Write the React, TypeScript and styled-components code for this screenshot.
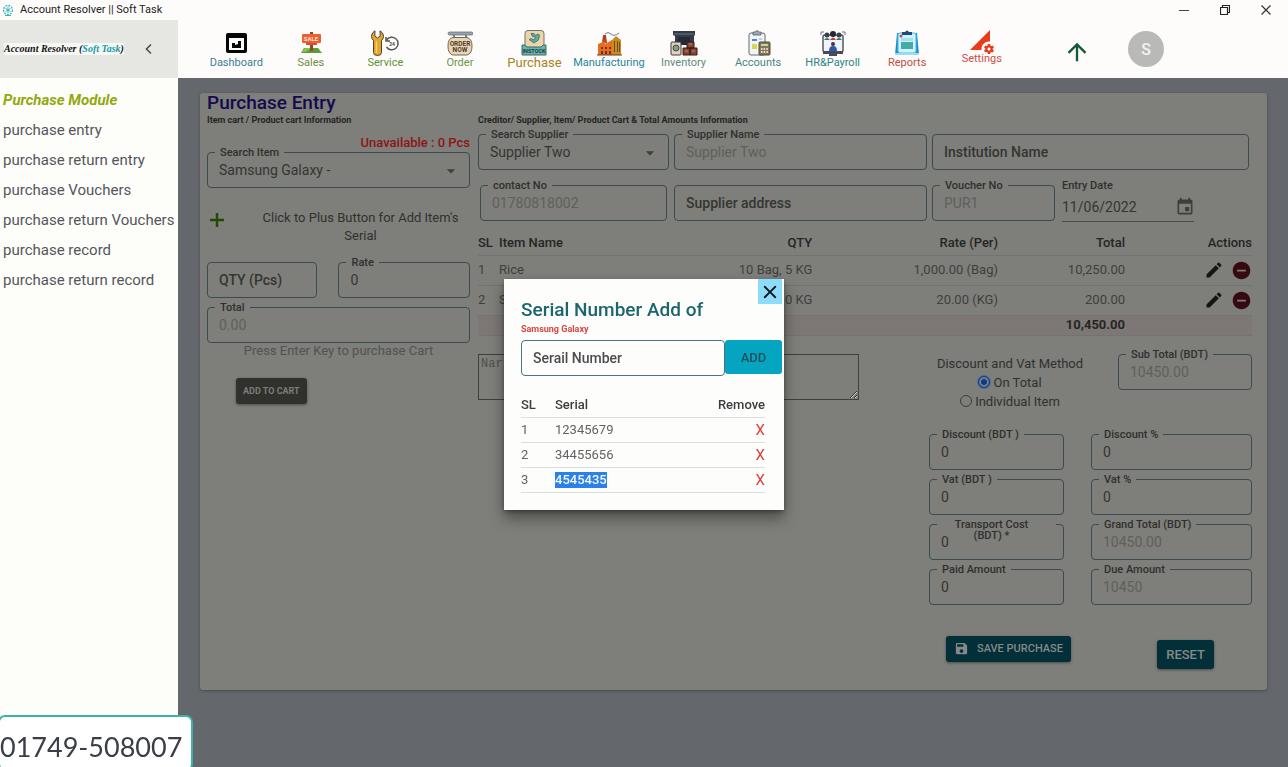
import React, { ReactNode, useId } from "react";
import styled, { createGlobalStyle } from "styled-components";
import {
  MdArrowDropDown,
  MdArrowUpward,
  MdClose,
  MdEdit,
  MdEvent,
  MdPermDataSetting,
  MdRemoveCircle,
  MdSave,
} from "react-icons/md";

const c = {
  ink: "#343533",
  text: "#3e3f3d",
  faint: "#5f605d",
  line: "#3c4b50",
  card: "#7e7e7a",
  rule: "#737370",
  tealDark: "#022f38",
};

const Global = createGlobalStyle`
  *, *::before, *::after { box-sizing: border-box; }
  body { margin: 0; font-family: Roboto, "Liberation Sans", sans-serif; background: #64676c; }
  button, input, select { font: inherit; color: inherit; }
  button { cursor: pointer; border: 0; padding: 0; background: none; }
  h1, h2, h3, p, ul { margin: 0; padding: 0; }
  ul { list-style: none; }
`;

/* ---------- frame ---------- */

const Page = styled.div`
  min-height: 100vh;
  display: flex;
  flex-direction: column;
`;
const TitleBar = styled.header`
  height: 20px;
  display: flex;
  align-items: center;
  gap: 6px;
  padding-left: 2px;
  background: #fdfcfb;
  font-size: 11px;
  line-height: 20px;
  color: #222;
`;
const WindowButtons = styled.div`
  margin-left: auto;
  display: flex;
  padding-right: 2px;
`;
const WindowButton = styled.button`
  width: 41px;
  height: 20px;
  display: grid;
  place-items: center;
`;
const Shell = styled.div`
  flex: 1;
  display: flex;
`;
const Sidebar = styled.aside`
  flex: 0 0 178px;
  background: #fdfdfa;
`;
const Brand = styled.div`
  height: 58px;
  display: flex;
  align-items: center;
  gap: 19px;
  padding-left: 4px;
  background: #e6e6e3;
`;
const BrandName = styled.span`
  font: italic bold 10px/12px "Liberation Serif", serif;
  background: #f6f8f6;
  color: #111;
  white-space: nowrap;
  b { color: #1a9aa5; }
`;
const Menu = styled.nav`
  padding: 7px 0 0 3px;
`;
const MenuTitle = styled.h2`
  font-size: 15px;
  line-height: 30px;
  font-style: italic;
  font-weight: 700;
  color: #94a80f;
`;
const MenuLink = styled.a`
  display: block;
  font-size: 15px;
  line-height: 30px;
  color: #55565a;
  text-decoration: none;
  white-space: nowrap;
`;
const Content = styled.div`
  flex: 1;
  min-width: 0;
`;

/* ---------- top navigation ---------- */

const TopBar = styled.div`
  height: 58px;
  display: flex;
  align-items: center;
  padding-left: 21px;
  background: #fdfcfb;
`;
const NavList = styled.ul`
  flex: 1;
  display: grid;
  grid-template-columns: repeat(11, minmax(0, 1fr));
  height: 100%;
`;
const NavLink = styled.a<{ $color: string; $active?: boolean; $tight?: boolean }>`
  display: flex;
  flex-direction: column;
  align-items: center;
  padding-top: 10px;
  font-size: ${(p) => (p.$active ? 13 : 11)}px;
  line-height: 14px;
  color: ${(p) => p.$color};
  text-decoration: none;
  white-space: nowrap;
  span { display: grid; height: ${(p) => (p.$tight ? 22 : 26)}px; }
`;
const UserArea = styled.div`
  flex: 0 0 269px;
  display: flex;
  align-items: center;
  gap: 37px;
  padding-left: 44px;
`;
const UpButton = styled.button`
  display: grid;
  margin-top: 6px;
  color: #145a34;
`;
const Avatar = styled.button`
  width: 36px;
  height: 36px;
  border-radius: 50%;
  background: #b9b9b7;
  color: #f3f3f3;
  font-size: 16px;
  font-weight: 500;
`;

/* ---------- purchase form ---------- */

const Card = styled.main`
  margin: 15px 21px 0 22px;
  padding: 0 15px 21px 7px;
  background: ${c.card};
  border-radius: 3px;
  box-shadow: 0 1px 3px rgba(0, 0, 0, 0.3);
  color: ${c.text};
`;
const CardTitle = styled.h1`
  font-size: 19px;
  line-height: 20px;
  font-weight: 500;
  color: #15094f;
`;
const Columns = styled.div`
  display: grid;
  grid-template-columns: minmax(0, 263fr) minmax(0, 774fr);
  column-gap: 8px;
`;
const SectionTitle = styled.h3`
  font-size: 9px;
  line-height: 14px;
  font-weight: 700;
  color: #252624;
`;
const Unavailable = styled.p`
  margin: 8px 0 1px;
  font-size: 13px;
  line-height: 16px;
  font-weight: 500;
  text-align: right;
  color: #8c1515;
`;
const SerialHint = styled.div`
  display: flex;
  align-items: flex-start;
  gap: 24px;
  margin: 21px 0 17px;
  font-size: 13px;
  line-height: 18px;
  text-align: center;
  color: #30312f;
  p { flex: 1; }
`;
const PlusButton = styled.button`
  display: grid;
  color: #214a06;
`;
const QtyRow = styled.div`
  display: grid;
  grid-template-columns: minmax(0, 110fr) minmax(0, 131fr);
  gap: 21px;
  margin-bottom: 9px;
`;
const Helper = styled.p`
  margin: 1px 0 20px;
  font-size: 13px;
  line-height: 14px;
  text-align: center;
  color: #52534f;
`;
const FormButton = styled.button<{ $kind: "cart" | "save" | "reset" }>`
  display: inline-flex;
  align-items: center;
  justify-content: center;
  gap: 8px;
  height: ${(p) => (p.$kind === "reset" ? 29 : 26)}px;
  padding: 0 ${(p) => (p.$kind === "cart" ? 7 : p.$kind === "reset" ? 9 : 8)}px;
  margin: ${(p) => (p.$kind === "cart" ? "0 0 0 29px" : p.$kind === "reset" ? "4px 0 0" : "0")};
  border-radius: 3px;
  font-size: ${(p) => (p.$kind === "cart" ? 9 : p.$kind === "save" ? 11 : 13)}px;
  font-weight: ${(p) => (p.$kind === "cart" ? 700 : 500)};
  color: ${(p) => (p.$kind === "cart" ? "#7c7c79" : "#85898a")};
  background: ${(p) => (p.$kind === "cart" ? "#30312d" : c.tealDark)};
  box-shadow: 0 1px 3px rgba(0, 0, 0, 0.4);
`;

const FieldBox = styled.div`
  position: relative;
  height: 36px;
  border: 1px solid ${c.line};
  border-radius: 4px;
`;
const FieldLabel = styled.label<{ $wrap?: boolean }>`
  position: absolute;
  top: -6px;
  left: 7px;
  right: ${(p) => (p.$wrap ? "7px" : "auto")};
  padding: ${(p) => (p.$wrap ? "0 25px 0 15px" : "0 5px")};
  background: ${c.card};
  font-size: 11px;
  line-height: 11px;
  font-weight: 500;
  text-align: center;
  white-space: ${(p) => (p.$wrap ? "normal" : "nowrap")};
  color: #2f302e;
`;
const FieldInput = styled.input`
  position: relative;
  z-index: 1;
  width: 100%;
  height: 34px;
  padding: 0 11px;
  border: 0;
  outline: 0;
  background: none;
  font-size: 14px;
  color: ${c.ink};
  &::placeholder { color: ${c.ink}; font-weight: 500; opacity: 1; }
  &:disabled { color: ${c.faint}; }
`;
const FieldSelect = styled.select`
  width: 100%;
  height: 34px;
  padding: 0 28px 0 11px;
  border: 0;
  outline: 0;
  appearance: none;
  background: none;
  font-size: 14px;
  color: ${c.ink};
`;
const SelectArrow = styled(MdArrowDropDown)`
  position: absolute;
  right: 8px;
  top: 8px;
  pointer-events: none;
`;

const PartyGrid = styled.div`
  display: grid;
  grid-template-columns: minmax(0, 191fr) minmax(0, 253fr) minmax(0, 317fr);
  gap: 15px 5px;
  padding: 7px 3px 9px 0;
`;
const Inset = styled.div`
  padding: 0 2px;
`;
const VoucherRow = styled.div`
  display: grid;
  grid-template-columns: minmax(0, 1fr) 132px 48px;
  column-gap: 7px;
`;
const DateField = styled.div`
  border-bottom: 1px solid #4b4c4a;
  label {
    display: block;
    margin-top: -6px;
    font-size: 11px;
    line-height: 14px;
    font-weight: 500;
    color: #2f302e;
  }
`;
const DateLine = styled.div`
  display: flex;
  align-items: center;
  height: 28px;
  input {
    flex: 1;
    min-width: 0;
    padding: 0;
    border: 0;
    outline: 0;
    background: none;
    font-size: 14px;
    color: ${c.ink};
  }
  button { display: grid; margin-right: -1px; }
`;

const ItemTable = styled.table`
  width: 100%;
  table-layout: fixed;
  border-collapse: collapse;
  font-size: 13px;
  line-height: 14px;
  th, td {
    padding: 0;
    height: 30px;
    text-align: right;
    border-bottom: 1px solid ${c.rule};
    white-space: nowrap;
  }
  th { height: 24px; font-weight: 500; color: #252624; }
  th:nth-child(-n + 2), td:nth-child(-n + 2) { text-align: left; }
  tfoot td {
    height: 20px;
    font-weight: 700;
    color: #252624;
    background: #7d7875;
  }
`;
const RowActions = styled.div`
  display: flex;
  justify-content: flex-end;
  gap: 7px;
  button { display: grid; color: #151614; }
  button:last-child { color: #350a10; }
`;

const LowerGrid = styled.div`
  display: grid;
  grid-template-columns: minmax(0, 381fr) minmax(0, 323fr);
  column-gap: 70px;
  margin-top: 18px;
  align-items: start;
`;
const Narration = styled.textarea`
  display: block;
  width: 100%;
  height: 46px;
  padding: 2px;
  border: 1px solid #3f403e;
  background: none;
  font: 12px/14px "Liberation Mono", monospace;
  color: ${c.ink};
  &::placeholder { color: #4f504d; opacity: 1; }
`;
const MethodRow = styled.div`
  display: grid;
  grid-template-columns: minmax(0, 162fr) minmax(0, 134fr);
  gap: 27px;
`;
const Method = styled.div`
  display: flex;
  flex-direction: column;
  align-items: center;
  height: 80px;
  font-size: 13px;
  line-height: 19px;
  white-space: nowrap;
  color: #30312f;
  label { display: flex; align-items: center; gap: 3px; }
`;
const Radio = styled.input`
  appearance: none;
  width: 12px;
  height: 12px;
  margin: 0;
  border: 1px solid #3a3b39;
  border-radius: 50%;
  &:checked {
    border-color: #123f86;
    background: #0d3c85;
    box-shadow: inset 0 0 0 2px #7d8188, 0 0 0 1px #4a6c9f;
  }
`;
const AmountGrid = styled.div`
  display: grid;
  grid-template-columns: minmax(0, 135fr) minmax(0, 161fr);
  gap: 9px 27px;
`;
const SubmitRow = styled.div`
  display: flex;
  justify-content: space-between;
  align-items: flex-start;
  padding: 31px 38px 0 17px;
`;

/* ---------- serial dialog ---------- */

const DialogLayer = styled.div`
  position: fixed;
  inset: 22px 0 0;
  z-index: 2;
  display: grid;
  place-items: center;
  pointer-events: none;
`;
const Dialog = styled.section`
  position: relative;
  width: 280px;
  padding: 20px 2px 17px 17px;
  background: #fdfdfb;
  box-shadow: 0 8px 14px rgba(0, 0, 0, 0.4), 0 2px 4px rgba(0, 0, 0, 0.3);
  pointer-events: auto;
`;
const CloseButton = styled.button`
  position: absolute;
  top: 0;
  right: 2px;
  width: 24px;
  height: 25px;
  display: grid;
  place-items: center;
  background: #8ddcfb;
  color: #0c1416;
`;
const DialogTitle = styled.h2`
  font-size: 19px;
  line-height: 22px;
  font-weight: 500;
  color: #1b6570;
`;
const DialogItem = styled.p`
  font-size: 9px;
  line-height: 12px;
  margin: 2px 0 5px;
  font-weight: 700;
  color: #d9463f;
`;
const SerialForm = styled.form`
  display: flex;
  align-items: flex-start;
  ${FieldBox} { flex: 1; border-color: #4c7382; }
  ${FieldInput}::placeholder { color: #4b4c4d; }
`;
const AddButton = styled.button`
  width: 57px;
  height: 34px;
  border-radius: 3px;
  background: #05a4c0;
  color: #22515c;
  font-size: 13px;
  font-weight: 500;
`;
const SerialTable = styled.table`
  width: calc(100% - 17px);
  margin-top: 16px;
  border-collapse: collapse;
  font-size: 13px;
  line-height: 16px;
  color: #616264;
  th, td {
    height: 25px;
    padding: 0;
    text-align: left;
    border-bottom: 1px solid #dddddb;
  }
  th { font-weight: 500; color: #3c3d3f; }
  th:first-child { width: 34px; }
  th:last-child, td:last-child { text-align: right; }
  mark { display: inline-block; background: #2b80ea; color: #f2f7fd; font-weight: 500; }
  button { color: #d9403c; font-size: 15px; line-height: 20px; display: inline-block; }
`;

const PhoneBadge = styled.a`
  position: fixed;
  left: -2px;
  bottom: -4px;
  width: 195px;
  height: 56px;
  padding-top: 3px;
  border: 2px solid #3bb3a5;
  border-radius: 7px;
  background: #fff;
  font: 27px/54px Lato, sans-serif;
  color: #3b3d47;
  text-decoration: none;
`;

/* ---------- icons ---------- */

const Svg = ({ children, size = 26, box = 26 }: { children: ReactNode; size?: number; box?: number }) => (
  <svg width={size} height={size} viewBox={`0 0 ${box} ${box}`} fill="none" aria-hidden="true">
    {children}
  </svg>
);

const icons: Record<string, ReactNode> = {
  Dashboard: (
    <Svg>
      <rect x="3" y="3" width="21" height="20" rx="2" fill="#060606" />
      <path fill="#fdfcfb" d="M6 8h15v12H6Z" />
      <path fill="#060606" d="M9 18v-5h3v2l3-1v-3h3v7Z" />
    </Svg>
  ),
  Sales: (
    <Svg>
      <path fill="#5a9e35" d="M6 18h14l4 5H3Z" />
      <path fill="#8bc34a" d="M7 18h6l-5 4H4Z" />
      <path fill="#96452a" d="M12 2h3v19h-3Z" />
      <rect x="4" y="4" width="19" height="9" rx="1" fill="#ee6031" />
      <text x="13" y="11" fontSize="6" fontWeight="700" textAnchor="middle" fill="#ffe3d3" fontFamily="Roboto">SALE</text>
      <path fill="#d65027" d="M8 13h11v2H8Z" />
    </Svg>
  ),
  Service: (
    <svg width="28" height="26" viewBox="0 0 28 26" fill="none" aria-hidden="true">
      <path
        d="M4 .8 3.800 6l2.700 2 2.700-2L9 .8q3.500 2 3.500 5.500 0 2.700-2 4.200v12q0 3-4 3t-4-3v-12Q.5 9 .5 6.300.500 2.800 4 .8Z"
        fill="#e5a52c"
        stroke="#4b4336"
      />
      <path d="M5.500 11v12" stroke="#f7cf6b" strokeWidth="1.500" />
      <path d="M15.500 10a6.300 6.300 0 1 1 0 7M15 7v4h4" stroke="#565656" strokeWidth="1.500" />
      <text x="21" y="15.500" fontSize="5" fontWeight="700" textAnchor="middle" fill="#444" fontFamily="Roboto">24</text>
    </svg>
  ),
  Order: (
    <Svg>
      <rect x="1" y="2" width="25" height="3" rx="1.5" fill="#97a4b1" stroke="#5c6570" strokeWidth=".7" />
      <path d="M7 5v3M19 5v3" stroke="#645a50" strokeWidth="1.5" />
      <path d="M6 7.500h14q5 1 5 8.500t-5 9H6q-5-1-5-9t5-8.500Z" fill="#ead6b4" stroke="#756653" />
      <text x="13" y="15.500" fontSize="6.500" fontWeight="700" textAnchor="middle" fill="#4b3b2d" fontFamily="Roboto">ORDER</text>
      <text x="13" y="22" fontSize="6.500" fontWeight="700" textAnchor="middle" fill="#4b3b2d" fontFamily="Roboto">NOW</text>
    </Svg>
  ),
  Purchase: (
    <Svg>
      <rect x="4" y="0.5" width="19" height="17" rx="3" fill="#eed5a7" stroke="#687570" />
      <path d="M10 3.500h3l1 2 3-1.500 1.500 1-1 5-4.500 3-5-3.500 2-1 3 1.500 1.500-3-3-.5Z" fill="#5caaa6" stroke="#376b69" strokeWidth=".8" />
      <path d="M1 15h3l2 2h14l2-2h3v10H1Z" fill="#68b3ae" stroke="#386b69" />
      <text x="13" y="23" fontSize="5.500" fontWeight="700" textAnchor="middle" fill="#203c3b" fontFamily="Roboto">INSTOCK</text>
    </Svg>
  ),
  Manufacturing: (
    <Svg>
      <path d="M9 4q3-3 6 0t8-1" stroke="#777" />
      <path d="M7 5h3l1 8H6Z" fill="#b5401c" />
      <path d="m2 14 7-3v3l7-4v15H2Z" fill="#e46f1f" />
      <path d="m16 10 4-4 5 4v15h-9Z" fill="#c98b22" />
      <path d="M5 17h2v2H5Zm4 0h2v2H9Zm4 0h2v2h-2ZM5 21h2v3H5Zm4 0h2v3H9Zm4 0h2v3h-2Z" fill="#7e2c16" />
      <path d="M18 11h1v11h-1Zm3 0h1v11h-1Zm2 1h1v10h-1Z" fill="#704d18" />
      <path d="M1 25h25" stroke="#6b371c" />
    </Svg>
  ),
  Inventory: (
    <svg width="28" height="26" viewBox="0 0 28 26" fill="none" aria-hidden="true">
      <path d="M3 1h22v4l-1 1v7H5V6L3 5Z" fill="#323b49" />
      <path d="M4 4h20" stroke="#66758a" />
      <path d="M8 7h12v8H8Z" fill="#242a35" />
      <rect x="1" y="12" width="10" height="13" rx="1" fill="#ddd3bf" stroke="#4c3730" />
      <circle cx="6" cy="18" r="3" fill="#7ba083" stroke="#4f4841" />
      <path d="M17 12h7v6h-7ZM13 18h7v7h-7Zm7 0h7v7h-7Z" fill="#8a4435" stroke="#2f1d1b" />
      <path d="M19 14h3M15 21h3M22 21h3" stroke="#c98166" />
    </svg>
  ),
  Accounts: (
    <Svg>
      <rect x="4" y="3" width="16" height="22" rx="2" fill="#f2f5f6" stroke="#636a72" />
      <path d="M8 2h2q2-3 4 0h2v3H8Z" fill="#9ea9b4" stroke="#59616a" strokeWidth=".8" />
      <path d="M7 9h5v2H7Z" fill="#4f83d7" />
      <path d="M7 14h5v5H7Z" fill="#d5d94d" />
      <path d="M14 9h3" stroke="#9aa5af" />
      <rect x="14" y="12" width="11" height="13" rx="1" fill="#82775c" stroke="#4d483b" />
      <path d="M16 14h7v2h-7Z" fill="#bfd79b" />
      <path d="M16 19h7M16 22h7" stroke="#eee1c3" strokeWidth="2" strokeDasharray="1.5 1.2" />
    </Svg>
  ),
  "HR&Payroll": (
    <Svg>
      <path d="M1 2h3M1 2v3M25 2h-3M25 2v3" stroke="#6c717d" />
      <rect x="3" y="5" width="20" height="17" rx="2" fill="#f1f3f6" stroke="#555967" strokeWidth="1.500" />
      <circle cx="7" cy="5" r="2.500" fill="#37424c" />
      <circle cx="19" cy="5" r="2.500" fill="#37424c" />
      <circle cx="13" cy="4" r="3" fill="#22252e" />
      <path d="M4 10q3-4 6 0Zm12 0q3-4 6 0Z" fill="#2f7a70" />
      <path d="M10 10q3-5 6 0Z" fill="#c9363f" />
      <circle cx="13" cy="14" r="2" fill="#403640" />
      <path d="M9 21q0-5 4-5t4 5Z" fill="#3155b6" />
      <path d="M3 21h20v3h-6v2H9v-2H3Z" fill="#464a58" />
    </Svg>
  ),
  Reports: (
    <Svg>
      <path d="M3 3h3v22H1Zm17 0h3l2 22h-5Z" fill="#1b8dcc" />
      <rect x="4" y="3" width="18" height="20" rx="2" fill="#d0f3fc" stroke="#46bde5" />
      <path d="M8 2h3q2-3 4 0h3v3H8Z" fill="#144e83" />
      <path d="M7 8h12v3H7Z" fill="#a4dff1" />
      <path d="M7 12h12v7H7Z" fill="#43aca9" />
      <circle cx="7" cy="6" r="1.5" fill="#dd3c4d" />
      <path d="M1 24h24" stroke="#9edbf0" strokeWidth="2" />
    </Svg>
  ),
  Settings: <MdPermDataSetting size={24} color="#e93a1c" aria-hidden="true" />,
};

const LogoIcon = () => (
  <Svg size={12} box={12}>
    <circle cx="6" cy="6" r="4.5" stroke="#37b7bd" strokeWidth="1.3" strokeDasharray="2 1" />
    <path d="M6 3v6M3.5 4.5l5 3M8.500 4.500l-5 3" stroke="#37b7bd" />
    <path d="M3 11.500h6" stroke="#37b7bd" />
  </Svg>
);

/* ---------- parts ---------- */

type FieldProps = {
  label: string;
  value?: string;
  disabled?: boolean;
  options?: string[];
  wrap?: boolean;
};

/* With no value the label sits inside the box, as the resting state of an outlined field. */
const Field = ({ label, value, disabled, options, wrap }: FieldProps) => {
  const id = useId();
  return (
    <FieldBox>
      {value !== undefined && (
        <FieldLabel htmlFor={id} $wrap={wrap}>
          {label}
        </FieldLabel>
      )}
      {options ? (
        <>
          <FieldSelect id={id} defaultValue={value}>
            {options.map((o) => (
              <option key={o}>{o}</option>
            ))}
          </FieldSelect>
          <SelectArrow size={20} aria-hidden="true" />
        </>
      ) : (
        <FieldInput
          id={id}
          defaultValue={value}
          disabled={disabled}
          placeholder={value === undefined ? label : undefined}
          aria-label={value === undefined ? label : undefined}
        />
      )}
    </FieldBox>
  );
};

const navItems = [
  { name: "Dashboard", color: "#3a7f93" },
  { name: "Sales", color: "#6e8f3c" },
  { name: "Service", color: "#5f932f" },
  { name: "Order", color: "#69973a" },
  { name: "Purchase", color: "#a88427", active: true },
  { name: "Manufacturing", color: "#26849a" },
  { name: "Inventory", color: "#5f8a80" },
  { name: "Accounts", color: "#45877f" },
  { name: "HR&Payroll", color: "#2c8583" },
  { name: "Reports", color: "#c24c44" },
  { name: "Settings", color: "#cc4f45", tight: true },
];

const menuItems = [
  "purchase entry",
  "purchase return entry",
  "purchase Vouchers",
  "purchase return Vouchers",
  "purchase record",
  "purchase return record",
];

const cartItems = [
  { name: "Rice", qty: "10 Bag, 5 KG", rate: "1,000.00 (Bag)", total: "10,250.00" },
  { name: "Sugar", qty: "10 KG", rate: "20.00 (KG)", total: "200.00" },
];

const serials = ["12345679", "34455656", "4545435"];

export default function App() {
  return (
    <Page>
      <Global />
      <TitleBar>
        <LogoIcon />
        <span>Account Resolver || Soft Task</span>
        <WindowButtons>
          <WindowButton aria-label="Minimize">
            <Svg size={10} box={10}><path d="M0 5.500h10" stroke="#444" /></Svg>
          </WindowButton>
          <WindowButton aria-label="Restore">
            <Svg size={10} box={10}><path d="M.5 2.500h7v7h-7ZM2.500 2.500v-2h7v7h-2" stroke="#222" strokeWidth="1.200" /></Svg>
          </WindowButton>
          <WindowButton aria-label="Close window">
            <Svg size={10} box={10}><path d="m.5.5 9 9m0-9-9 9" stroke="#333" strokeWidth="1.200" /></Svg>
          </WindowButton>
        </WindowButtons>
      </TitleBar>

      <Shell>
        <Sidebar>
          <Brand>
            <BrandName>Account Resolver (<b>Soft Task</b>)</BrandName>
            <button aria-label="Collapse menu">
              <Svg size={12} box={12}><path d="M8 1.500 3.500 6 8 10.500" stroke="#4d4d4d" strokeWidth="1.600" /></Svg>
            </button>
          </Brand>
          <Menu>
            <MenuTitle>Purchase Module</MenuTitle>
            {menuItems.map((m) => (
              <MenuLink href="#" key={m}>{m}</MenuLink>
            ))}
          </Menu>
        </Sidebar>

        <Content>
          <TopBar>
            <NavList>
              {navItems.map((n) => (
                <li key={n.name}>
                  <NavLink href="#" $color={n.color} $active={n.active} $tight={n.tight}>
                    <span>{icons[n.name]}</span>
                    {n.name}
                  </NavLink>
                </li>
              ))}
            </NavList>
            <UserArea>
              <UpButton aria-label="Scroll up"><MdArrowUpward size={28} /></UpButton>
              <Avatar aria-label="Account">S</Avatar>
            </UserArea>
          </TopBar>

          <Card>
            <CardTitle>Purchase Entry</CardTitle>
            <Columns>
              <div>
                <SectionTitle>Item cart / Product cart Information</SectionTitle>
                <Unavailable>Unavailable : 0 Pcs</Unavailable>
                <Field label="Search Item" value="Samsung Galaxy -" options={["Samsung Galaxy -"]} />
                <SerialHint>
                  <PlusButton aria-label="Add serial">
                    <Svg size={20} box={20}>
                      <path d="M10 4v14M3 11h14" stroke="currentColor" strokeWidth="2.400" />
                    </Svg>
                  </PlusButton>
                  <p>Click to Plus Button for Add Item's Serial</p>
                </SerialHint>
                <QtyRow>
                  <Field label="QTY (Pcs)" />
                  <Field label="Rate" value="0" />
                </QtyRow>
                <Field label="Total" value="0.00" disabled />
                <Helper>Press Enter Key to purchase Cart</Helper>
                <FormButton $kind="cart">ADD TO CART</FormButton>
              </div>

              <div>
                <SectionTitle>Creditor/ Supplier, Item/ Product Cart &amp; Total Amounts Information</SectionTitle>
                <PartyGrid>
                  <Field label="Search Supplier" value="Supplier Two" options={["Supplier Two"]} />
                  <Field label="Supplier Name" value="Supplier Two" disabled />
                  <Field label="Institution Name" />
                  <Inset><Field label="contact No" value="01780818002" disabled /></Inset>
                  <Field label="Supplier address" />
                  <VoucherRow>
                    <Field label="Voucher No" value="PUR1" disabled />
                    <DateField>
                      <label htmlFor="entry-date">Entry Date</label>
                      <DateLine>
                        <input id="entry-date" defaultValue="11/06/2022" />
                        <button aria-label="Pick a date"><MdEvent size={20} /></button>
                      </DateLine>
                    </DateField>
                  </VoucherRow>
                </PartyGrid>

                <ItemTable>
                  <colgroup>
                    <col style={{ width: 21 }} />
                    <col />
                    <col style={{ width: "14%" }} />
                    <col style={{ width: "24%" }} />
                    <col style={{ width: 127 }} />
                    <col style={{ width: 127 }} />
                  </colgroup>
                  <thead>
                    <tr>
                      <th>SL</th><th>Item Name</th><th>QTY</th><th>Rate (Per)</th><th>Total</th><th>Actions</th>
                    </tr>
                  </thead>
                  <tbody>
                    {cartItems.map((item, i) => (
                      <tr key={item.name}>
                        <td>{i + 1}</td>
                        <td>{item.name}</td>
                        <td>{item.qty}</td>
                        <td>{item.rate}</td>
                        <td>{item.total}</td>
                        <td>
                          <RowActions>
                            <button aria-label={`Edit ${item.name}`}><MdEdit size={20} /></button>
                            <button aria-label={`Remove ${item.name}`}><MdRemoveCircle size={21} /></button>
                          </RowActions>
                        </td>
                      </tr>
                    ))}
                  </tbody>
                  <tfoot>
                    <tr><td /><td /><td /><td /><td>10,450.00</td><td /></tr>
                  </tfoot>
                </ItemTable>

                <LowerGrid>
                  <Narration placeholder="Narration" aria-label="Narration" />
                  <div>
                    <MethodRow>
                      <Method role="radiogroup" aria-label="Discount and Vat Method">
                        <span>Discount and Vat Method</span>
                        <label><Radio type="radio" name="method" defaultChecked />On Total</label>
                        <label><Radio type="radio" name="method" />Individual Item</label>
                      </Method>
                      <Field label="Sub Total (BDT)" value="10450.00" disabled />
                    </MethodRow>
                    <AmountGrid>
                      <Field label="Discount (BDT )" value="0" />
                      <Field label="Discount %" value="0" />
                      <Field label="Vat (BDT )" value="0" />
                      <Field label="Vat %" value="0" />
                      <Field label="Transport Cost (BDT) *" value="0" wrap />
                      <Field label="Grand Total (BDT)" value="10450.00" disabled />
                      <Field label="Paid Amount" value="0" />
                      <Field label="Due Amount" value="10450" disabled />
                    </AmountGrid>
                    <SubmitRow>
                      <FormButton $kind="save"><MdSave size={15} aria-hidden="true" />SAVE PURCHASE</FormButton>
                      <FormButton $kind="reset">RESET</FormButton>
                    </SubmitRow>
                  </div>
                </LowerGrid>
              </div>
            </Columns>
          </Card>
        </Content>
      </Shell>

      <DialogLayer>
        <Dialog role="dialog" aria-labelledby="serial-title">
          <CloseButton aria-label="Close"><MdClose size={22} /></CloseButton>
          <DialogTitle id="serial-title">Serial Number Add of</DialogTitle>
          <DialogItem>Samsung Galaxy</DialogItem>
          <SerialForm>
            <Field label="Serail Number" />
            <AddButton type="button">ADD</AddButton>
          </SerialForm>
          <SerialTable>
            <thead>
              <tr><th>SL</th><th>Serial</th><th>Remove</th></tr>
            </thead>
            <tbody>
              {serials.map((s, i) => (
                <tr key={s}>
                  <td>{i + 1}</td>
                  <td>{i === 2 ? <mark>{s}</mark> : s}</td>
                  <td><button aria-label={`Remove ${s}`}>X</button></td>
                </tr>
              ))}
            </tbody>
          </SerialTable>
        </Dialog>
      </DialogLayer>

      <PhoneBadge href="tel:01749508007">01749-508007</PhoneBadge>
    </Page>
  );
}
